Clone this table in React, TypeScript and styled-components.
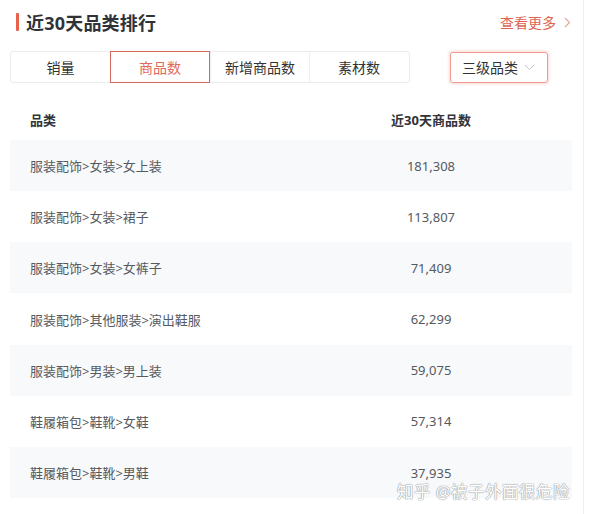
import React from "react";
import styled, { createGlobalStyle } from "styled-components";

const Global = createGlobalStyle`
  html, body { margin: 0; padding: 0; background: #fff; }
  body { font-family: "Noto Sans", "Noto Sans CJK SC", sans-serif; color: #333; }
`;

const Page = styled.div`
  position: relative;
  width: 584px;
  height: 514px;
  border-right: 1px solid #eceff2;
  box-sizing: border-box;
  padding: 0 12px 0 10px;
  overflow: hidden;
`;

const Header = styled.div`
  display: flex;
  align-items: center;
  justify-content: space-between;
  height: 44px;
  padding: 0 0 0 6px;
`;

const Title = styled.div`
  display: flex;
  align-items: center;
  gap: 7px;
  font-size: 18px;
  font-weight: 700;
  color: #2f3338;
  letter-spacing: 0.2px;
  &::before {
    content: "";
    display: block;
    width: 3px;
    height: 18px;
    background: #e8614c;
    border-radius: 1px;
  }
`;

const More = styled.div`
  display: flex;
  align-items: center;
  gap: 8px;
  font-size: 14px;
  color: #e06450;
`;

const Controls = styled.div`
  display: flex;
  align-items: center;
  justify-content: space-between;
  margin-top: 7px;
  padding-right: 23px;
`;

const Tabs = styled.div`
  display: flex;
  border: 1px solid #e9ebee;
  border-radius: 3px;
  height: 32px;
  width: 400px;
  box-sizing: border-box;
`;

const Tab = styled.div<{ $active?: boolean }>`
  width: ${(p) => (p.$active ? "100px" : "99px")};
  display: flex;
  align-items: center;
  justify-content: center;
  font-size: 14px;
  color: ${(p) => (p.$active ? "#e06a5c" : "#333")};
  box-sizing: border-box;
  border-left: 1px solid ${(p) => (p.$active ? "#d46a5e" : "#eceef1")};
  border-right: ${(p) => (p.$active ? "1px solid #d46a5e" : "none")};
  outline: ${(p) => (p.$active ? "1px solid #d46a5e" : "none")};
  outline-offset: -1px;
  margin: ${(p) => (p.$active ? "-1px 0" : "0")};
  height: ${(p) => (p.$active ? "32px" : "30px")};
  &:first-child { border-left: none; }
`;

const Select = styled.div`
  display: flex;
  align-items: center;
  justify-content: space-between;
  width: 98px;
  height: 31px;
  box-sizing: border-box;
  padding: 0 12px 0 11px;
  border: 1px solid #ee9c90;
  border-radius: 3px;
  box-shadow: 0 0 3px 1px rgba(232, 120, 100, 0.28);
  font-size: 14px;
  color: #333;
`;

const Table = styled.div`
  margin-top: 16px;
  width: 562px;
`;

const Row = styled.div<{ $shade?: boolean; $head?: boolean }>`
  display: grid;
  grid-template-columns: 1fr 282px;
  align-items: center;
  height: ${(p) => (p.$head ? "41px" : "51.17px")};
  background: ${(p) => (p.$shade ? "#f8f9fb" : "#fff")};
  font-size: 13px;
  font-weight: ${(p) => (p.$head ? 700 : 400)};
  color: ${(p) => (p.$head ? "#2f3338" : "#555a60")};
`;

const Cat = styled.div`
  padding-left: 20px;
`;

const Num = styled.div`
  text-align: center;
`;

const Watermark = styled.div`
  position: absolute;
  right: 13px;
  bottom: 12px;
  font-size: 16.5px;
  line-height: 20px;
  color: #fff;
  letter-spacing: 0.5px;
  text-shadow: 0 0 1px #9aa0a6, 0 0 1px #9aa0a6, 0 0 1px #9aa0a6;
`;

const rows: [string, string][] = [
  ["服装配饰>女装>女上装", "181,308"],
  ["服装配饰>女装>裙子", "113,807"],
  ["服装配饰>女装>女裤子", "71,409"],
  ["服装配饰>其他服装>演出鞋服", "62,299"],
  ["服装配饰>男装>男上装", "59,075"],
  ["鞋履箱包>鞋靴>女鞋", "57,314"],
  ["鞋履箱包>鞋靴>男鞋", "37,935"],
];

export default function App() {
  return (
    <>
      <Global />
      <Page>
        <Header>
          <Title>近30天品类排行</Title>
          <More>
            查看更多
            <svg width="7" height="11" viewBox="0 0 7 11">
              <path d="M1 1l4.5 4.5L1 10" fill="none" stroke="#eba194" strokeWidth="1.1" />
            </svg>
          </More>
        </Header>
        <Controls>
          <Tabs>
            <Tab>销量</Tab>
            <Tab $active>商品数</Tab>
            <Tab>新增商品数</Tab>
            <Tab>素材数</Tab>
          </Tabs>
          <Select>
            三级品类
            <svg width="11" height="7" viewBox="0 0 11 7">
              <path d="M1 1l4.5 4.5L10 1" fill="none" stroke="#c4c8cc" strokeWidth="1" />
            </svg>
          </Select>
        </Controls>
        <Table>
          <Row $head>
            <Cat>品类</Cat>
            <Num>近30天商品数</Num>
          </Row>
          {rows.map(([c, n], i) => (
            <Row key={c} $shade={i % 2 === 0}>
              <Cat>{c}</Cat>
              <Num>{n}</Num>
            </Row>
          ))}
        </Table>
        <Watermark>知乎 @被子外面很危险</Watermark>
      </Page>
    </>
  );
}
